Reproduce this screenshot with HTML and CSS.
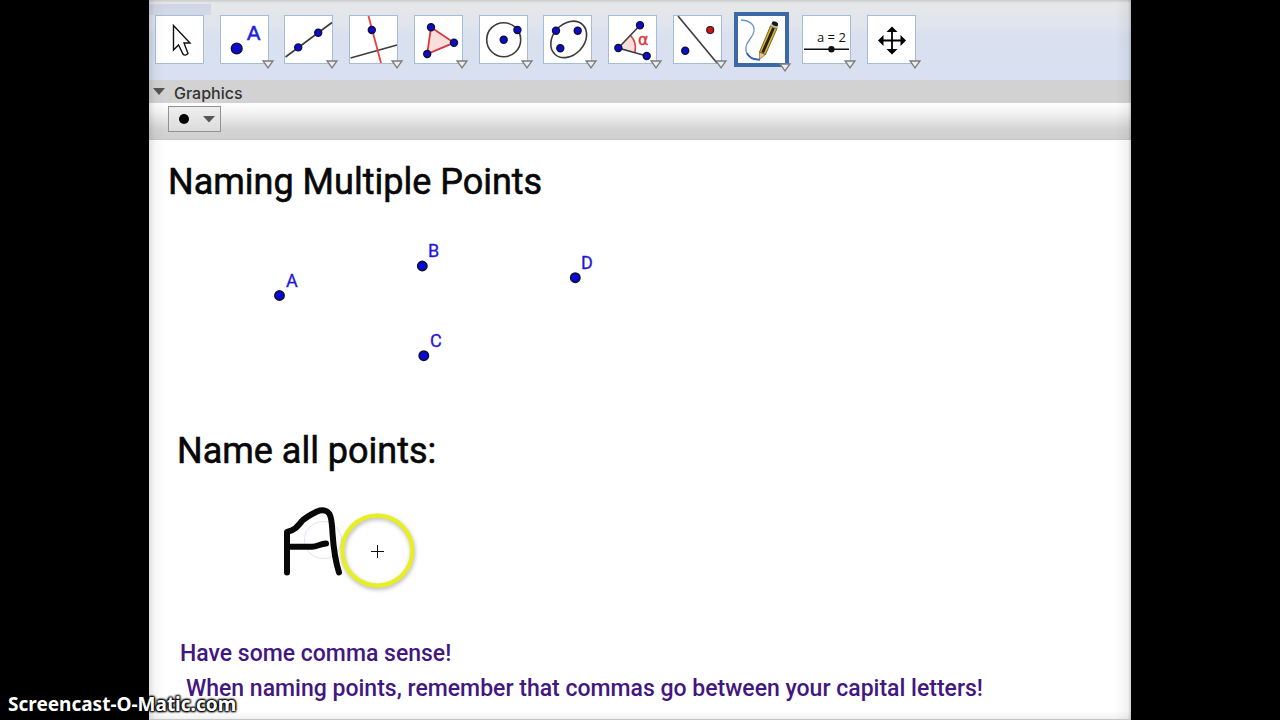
FILE: index.html
```html
<!DOCTYPE html>
<html lang="en">
<head>
<meta charset="utf-8">
<title>Naming Multiple Points</title>
<link rel="stylesheet" href="styles.css">
</head>
<body>
<main class="window">
  <nav class="toolbar" aria-label="Tools">
    <button class="tool" aria-label="Move"><svg viewBox="1 1 47 47"><path d="M18.500 10.500V35L23.500 30L28 39Q30 41.500 33 38.500L29 28H35Z" fill="#fff" stroke="#111" stroke-width="1.400"/></svg></button>
    <button class="tool menu" aria-label="Point"><svg viewBox="1 1 47 47"><circle class="pt" cx="16.700" cy="33.500" r="5.400"/><text class="tool-a" x="27" y="25">A</text><path class="more" d="M43 46H53L48 53Z"/></svg></button>
    <button class="tool menu" aria-label="Line"><svg viewBox="1 1 47 47"><path class="ln" d="M1.500 42L48 7.500"/><circle class="pt" cx="14.200" cy="32.400" r="3.500"/><circle class="pt" cx="34.200" cy="17.700" r="3.500"/><path class="more" d="M43 46H53L48 53Z"/></svg></button>
    <button class="tool menu" aria-label="Perpendicular line"><svg viewBox="1 1 47 47"><path class="ln" d="M1.500 43L48 30"/><path d="M19.500 1L32 48" stroke="#e8423c" stroke-width="1.800"/><circle class="pt" cx="22.800" cy="15" r="3.500"/><path class="more" d="M43 46H53L48 53Z"/></svg></button>
    <button class="tool menu" aria-label="Polygon"><svg viewBox="1 1 47 47"><path d="M17 12.300L40 27.700L13.200 39Z" fill="#f8dedd" stroke="#d8383c" stroke-width="1.800"/><circle class="pt" cx="17" cy="12.300" r="3.500"/><circle class="pt" cx="40" cy="27.700" r="3.500"/><circle class="pt" cx="13.200" cy="39" r="3.500"/><path class="more" d="M43 46H53L48 53Z"/></svg></button>
    <button class="tool menu" aria-label="Circle"><svg viewBox="1 1 47 47"><circle class="ln" cx="24.700" cy="24.700" r="17"/><circle class="pt" cx="24.700" cy="24.700" r="3.500"/><circle class="pt" cx="38.400" cy="15" r="3.500"/><path class="more" d="M43 46H53L48 53Z"/></svg></button>
    <button class="tool menu" aria-label="Ellipse"><svg viewBox="1 1 47 47"><ellipse class="ln" cx="25.700" cy="24.400" rx="20.300" ry="15.500" transform="rotate(-47 25.700 24.400)"/><circle class="pt" cx="13" cy="15.700" r="3.500"/><circle class="pt" cx="34.700" cy="15.700" r="3.500"/><circle class="pt" cx="17.300" cy="33.300" r="3.500"/><path class="more" d="M43 46H53L48 53Z"/></svg></button>
    <button class="tool menu" aria-label="Angle"><svg viewBox="1 1 47 47"><path d="M10.300 33L22.500 20.500Q29 27 27 37.300Z" fill="#f8dedd"/><path d="M22.500 20.500Q29 27 27 37.300" fill="none" stroke="#d8383c" stroke-width="1.500"/><path class="ln" d="M32 10.300L10.300 33L38.700 41"/><circle class="pt" cx="10.300" cy="33" r="3.500"/><circle class="pt" cx="32" cy="10.300" r="3.500"/><circle class="pt" cx="38.700" cy="41" r="3.500"/><text class="tool-alpha" x="30" y="30">α</text><path class="more" d="M43 46H53L48 53Z"/></svg></button>
    <button class="tool menu" aria-label="Reflect about line"><svg viewBox="1 1 47 47"><path class="ln" d="M5 1L44 48"/><circle cx="37.200" cy="15" r="3.500" fill="#d01414" stroke="#222" stroke-width="1.200"/><circle class="pt" cx="12.200" cy="35.700" r="3.500"/><path class="more" d="M43 46H53L48 53Z"/></svg></button>
    <button class="tool menu selected" aria-label="Pen" aria-pressed="true"><svg viewBox="1 1 47 47"><path d="M4 5C11 5 18 9 17 16C16 23 10 25 9 32C8 39 13 45 23 44.500" fill="none" stroke="#6f92d0" stroke-width="1.300"/><path d="M10 38Q13 45 23 44.500" fill="none" stroke="#2d5eb4" stroke-width="1.800"/><path d="M22.500 44.500L22.500 37L28.500 39.500Z" fill="#e2c58c" stroke="#6b5423" stroke-width=".6"/><path d="M22.500 37L33.500 11L40 13.500L28.500 39.500Z" fill="#d6b52c" stroke="#5e4a10" stroke-width=".8"/><path d="M25.700 37.500L36.500 13" stroke="#251d08" stroke-width="2.800"/><path d="M33.500 11L35 8L41 10.500L40 13.500Z" fill="#c8c8bd" stroke="#777" stroke-width=".5"/><ellipse cx="38" cy="8.800" rx="3.200" ry="2.200" transform="rotate(22 38 8.800)" fill="#181818"/><path class="more" d="M43 49H53L48 56Z"/></svg></button>
    <button class="tool menu" aria-label="Slider"><svg viewBox="1 1 47 47"><path d="M2 34.300H47" stroke="#111" stroke-width="1.600"/><circle cx="29.400" cy="34.300" r="3.200" fill="#111"/><text class="tool-slider" x="15" y="27">a = 2</text><path class="more" d="M43 46H53L48 53Z"/></svg></button>
    <button class="tool menu" aria-label="Move graphics view"><svg viewBox="1 1 47 47"><path d="M25 14V37M14 25.500H36" stroke="#000" stroke-width="1.800"/><path d="M25 11.500L30.500 17H19.500ZM25 39.500L30.500 34H19.500ZM11 25.500L16.500 20V31ZM39 25.500L33.500 20V31Z"/><path class="more" d="M43 46H53L48 53Z"/></svg></button>
  </nav>

  <header class="panel-title">
    <button class="collapse" aria-label="Collapse panel"><svg width="12" height="7" viewBox="0 0 12 7"><path d="M0 0H12L6 7Z" fill="#555"/></svg></button>
    <span>Graphics</span>
  </header>

  <div class="stylebar">
    <button class="point-style" aria-label="Point style">
      <svg width="51" height="24" viewBox="0 0 51 24"><circle cx="15" cy="12" r="5" fill="#000"/><path d="M34 9H46L40 15.500Z" fill="#555"/></svg>
    </button>
  </div>

  <section class="canvas">
    <h1 class="heading">Naming Multiple Points</h1>
    <svg class="drawing" width="600" height="225" role="img" aria-label="Points A, B, C and D">
      <g class="dot">
        <circle cx="130.500" cy="91.500" r="4.600"/><circle cx="273.300" cy="62" r="4.600"/>
        <circle cx="274.800" cy="151.700" r="4.600"/><circle cx="426.300" cy="73.700" r="4.600"/>
      </g>
      <g class="label">
        <text x="137" y="83">A</text><text x="279" y="53">B</text>
        <text x="281" y="143">C</text><text x="432" y="65">D</text>
      </g>
    </svg>
    <h2 class="heading subheading">Name all points:</h2>
    <svg class="drawing" width="600" height="163" role="img" aria-label="Handwritten letter A">
      <circle cx="174" cy="67" r="18.500" fill="none" stroke="#e2e2f4"/>
      <path class="ink" d="M138 99.500V59C146 57 148 54 153 48C157 44 163 41 168 38.500C173 36.500 178 37 180.500 41C183 46 183 53 183.500 60C184.500 75 186 87 190 99.500M138 73.700H163C168 73.700 171 71 177 70.500"/>
      <circle class="ring-shadow" cx="229" cy="79.500" r="35"/>
      <circle class="ring" cx="228.300" cy="77.500" r="35"/>
      <path d="M222 78.500H235M228.500 72V85" stroke="#111"/>
    </svg>
    <p class="note">Have some comma sense!</p>
    <p class="note indented">When naming points, remember that commas go between your capital letters!</p>
  </section>
</main>
<div class="watermark">Screencast-O-Matic.com</div>
</body>
</html>
```
FILE: styles.css
```css
* { box-sizing: border-box; }
body {
  margin: 0;
  background: #000;
  font-family: Roboto, "Liberation Sans", sans-serif;
  overflow: hidden;
}
button { font: inherit; padding: 0; margin: 0; background: none; border: 0; }
.window {
  position: relative;
  display: flex;
  flex-direction: column;
  min-height: 100vh;
  margin: 0 149px;
  background: #fff;
  border-bottom: 1px solid #c4c4c4;
}
.window::after {
  content: "";
  position: absolute;
  inset: 0;
  pointer-events: none;
  background:
    linear-gradient(to right, rgba(0,0,0,.12), rgba(0,0,0,.03) 6px, transparent 16px),
    linear-gradient(to left, rgba(0,0,0,.2), rgba(0,0,0,.05) 3px, transparent 16px),
    linear-gradient(to top, rgba(0,0,0,.06), transparent 8px);
}
.toolbar {
  display: flex;
  justify-content: space-between;
  align-items: flex-start;
  height: 80px;
  padding: 15px 215px 0 6px;
  background:
    linear-gradient(#d0d5e2, #d3d9e8) 0 4px / 62px 11px no-repeat,
    linear-gradient(#c9cbcc 0, #e6e8e8 3px, #e3e5e8 14px, #e1e5ee 24px, #d9e0ee 36px, #d9e0f1 80px);
}
.tool {
  flex: none;
  width: 49px;
  height: 49px;
  background: #fff;
  border: 1px solid #a5bddd;
}
.tool svg { display: block; width: 47px; height: 47px; overflow: visible; }
.tool.selected { border-color: #3c69a3; box-shadow: 0 0 0 3px #3c69a3; }
.pt { fill: #0c0ccc; stroke: #10103c; stroke-width: 1.4; }
.ln { fill: none; stroke: #3c3c3c; stroke-width: 1.6; }
.more { fill: #ececec; stroke: #7c7c7c; stroke-width: 1.3; }
.tool-a { font: 20px "Liberation Sans", sans-serif; fill: #2020dc; stroke: #2020dc; stroke-width: .5; }
.tool-alpha { font: 16px "DejaVu Sans", sans-serif; fill: #d8383c; stroke: #d8383c; stroke-width: .4; }
.tool-slider { font: 13px "Open Sans", sans-serif; fill: #111; }
.panel-title {
  display: flex;
  align-items: center;
  gap: 9px;
  height: 23px;
  padding: 3px 4px 0;
  background: #d2d2d2;
  color: #333;
  font: 500 16px/20px Inter, sans-serif;
}
.collapse { display: flex; padding-bottom: 4px; }
.stylebar {
  height: 37px;
  padding: 3px 19px;
  background: linear-gradient(#fff, #f4f4f4 25%, #d3d3d3 75%, #d0d0d0);
  border-bottom: 1px solid #c6c6c6;
}
.point-style {
  display: block;
  background: linear-gradient(#eee, #dcdcdc);
  border: 1px solid #929292;
}
.point-style svg { display: block; }
.canvas { flex: 1; padding-top: 20px; }
.heading {
  margin: 0;
  padding-left: 19px;
  font-size: 36px;
  line-height: 44px;
  font-weight: 400;
  color: #080808;
  -webkit-text-stroke: 0.6px #080808;
}
.subheading { padding-left: 28px; }
.drawing { display: block; max-width: 100%; }
.dot { fill: #0808dc; stroke: #101030; stroke-width: 1.7; }
.label { font-size: 18px; fill: #2418d8; stroke: #2418d8; stroke-width: .3; }
.ink { fill: none; stroke: #080808; stroke-width: 6; stroke-linecap: round; stroke-linejoin: round; }
.ring { fill: none; stroke: #e8f01c; stroke-width: 4; }
.ring-shadow { fill: none; stroke: rgba(0,0,0,.3); stroke-width: 4; filter: blur(2px); }
.note {
  margin: 0;
  padding-left: 31px;
  font-size: 23px;
  line-height: 35px;
  font-weight: 500;
  color: #42177f;
}
.indented { padding-left: 37px; }
.watermark {
  position: absolute;
  left: 8px;
  bottom: 4px;
  color: #fff;
  font: 700 19px/24px "Noto Sans", "Open Sans", sans-serif;
  text-shadow: 0 0 2px #000, 1px 1px 2px #000, -1px -1px 2px #000, 1px -1px 2px #000, -1px 1px 2px #000;
}
```
